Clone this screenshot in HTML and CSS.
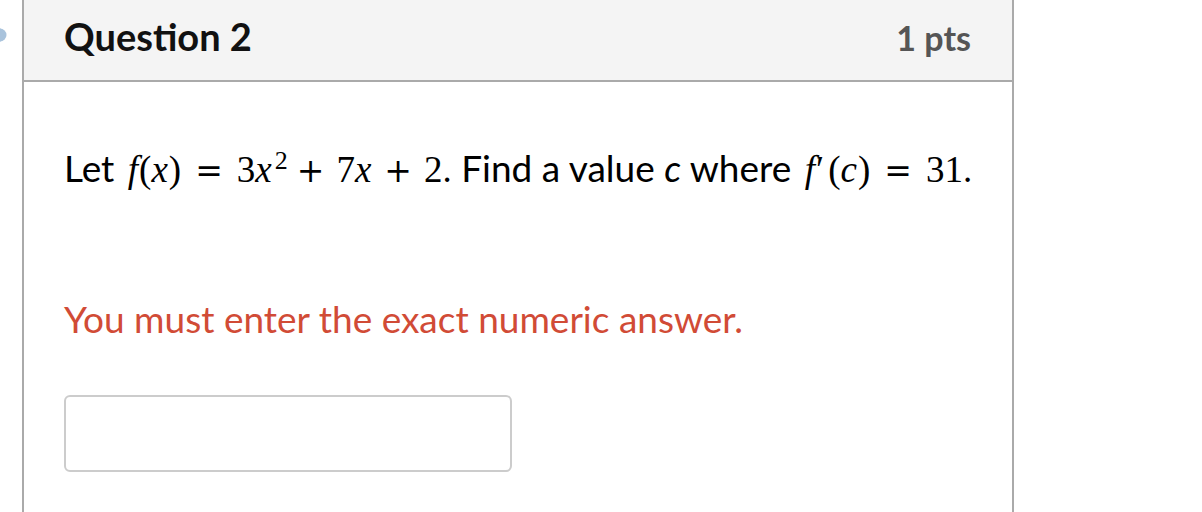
FILE: index.html
```html
<!DOCTYPE html>
<html lang="en">
<head>
<meta charset="utf-8">
<title>Question 2</title>
<link rel="stylesheet" href="styles.css">
</head>
<body>
<div class="page">
  <div class="side">
    <svg class="flag" width="8" height="18" viewBox="0 0 8 18"><path d="M0 2 Q7 9 0 16 Z" fill="#a9c3dc"/><circle cx="0" cy="9" r="6.5" fill="#a9c3dc"/></svg>
  </div>
  <div class="card">
    <div class="card-header">
      <span class="q-title">Question 2</span>
      <span class="q-pts">1 pts</span>
    </div>
    <div class="card-body">
      <p class="q-text">Let <span class="m"><i class="mf">f</i>(<i>x</i>)<span class="rel">=</span>3<i>x</i><sup>2</sup><span class="op op-a">+</span>7<i>x</i><span class="op">+</span>2.</span> Find a value <i class="ci">c</i> where <span class="m"><i class="mf">f</i><span class="pr">′</span>(<i>c</i>)<span class="rel">=</span>31.</span></p>
      <p class="q-warn">You must enter the exact numeric answer.</p>
      <input class="answer" type="text" aria-label="Answer">
    </div>
  </div>
</div>
</body>
</html>
```

FILE: styles.css
```css
html, body {
  margin: 0;
  padding: 0;
  background: #ffffff;
}
body {
  font-family: Lato, "Open Sans", sans-serif;
  color: #000;
}
.page {
  display: flex;
  align-items: flex-start;
}
.side {
  width: 22px;
  padding-top: 26px;
  flex: none;
}
.flag {
  display: block;
}
.card {
  width: 988px;
  height: 512px;
  overflow: hidden;
  border-left: 2px solid #aaaaaa;
  border-right: 2px solid #aaaaaa;
  box-sizing: content-box;
  display: flex;
  flex-direction: column;
}
.card-header {
  flex: none;
  height: 80px;
  background: #f4f4f4;
  border-bottom: 2px solid #aaaaaa;
  display: flex;
  align-items: center;
  justify-content: space-between;
  padding: 0 41px 0 40px;
}
.q-title {
  font-weight: 700;
  font-size: 38px;
  color: #111;
  margin-top: -8px;
}
.q-pts {
  font-weight: 700;
  font-size: 34px;
  color: #555;
  margin-top: -6px;
}
.card-body {
  flex: none;
  padding: 0 40px;
}
.q-text {
  margin: 66px 0 0;
  font-size: 37px;
  line-height: 40px;
  white-space: nowrap;
}
.m {
  font-family: "Liberation Serif", "Times New Roman", serif;
  font-size: 37px;
  margin-left: 2px;
}
.m i {
  font-style: italic;
  padding-right: 1px;
}
.mf {
  padding: 0 4px 0 2px;
}
.pr {
  margin-right: 4px;
}
.m sup {
  font-size: 26px;
  line-height: 0;
  margin-left: 2px;
}
.rel,
.op {
  font-family: "DejaVu Serif", serif;
  font-size: 33px;
  font-weight: 300;
}
.rel {
  margin: 0 14px;
}
.op {
  margin: 0 12px;
}
.op-a {
  margin-left: 9px;
}
.ci {
  font-style: italic;
}
.q-warn {
  margin: 108px 0 0;
  font-size: 37px;
  line-height: 40px;
  color: #d14b36;
}
.answer {
  display: block;
  margin-top: 56px;
  width: 448px;
  height: 77px;
  box-sizing: border-box;
  border: 2px solid #cccccc;
  border-radius: 6px;
  background: #fff;
  outline: none;
  padding: 0;
}
```
